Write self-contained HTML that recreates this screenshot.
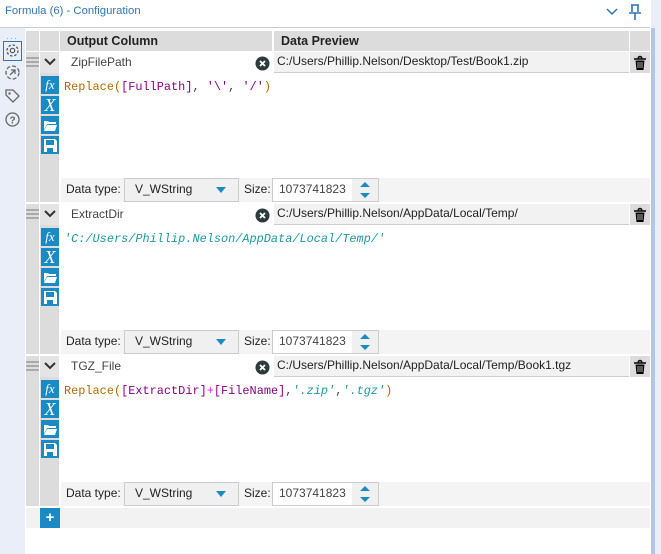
<!DOCTYPE html>
<html><head><meta charset="utf-8"><style>
*{margin:0;padding:0;box-sizing:border-box}
body{width:661px;height:554px;position:relative;background:#fff;font-family:"Segoe UI","Liberation Sans",sans-serif;font-size:12px;color:#222;overflow:hidden}
.a{position:absolute}
.title{left:5px;top:5px;color:#2e75b6;font-size:11.3px}
.hdr{top:31px;height:20px;background:#dcdcdc;font-weight:bold;font-size:12.5px;line-height:20px}
.mono{font-family:"Liberation Mono",monospace;font-size:11.9px}
.ico{left:41px;width:18px;height:18px;background:#1b8ac4;color:#fff}
.inp{background:#fff}
.sel{background:#f0f0f0;border:1px solid #ccc}
</style></head><body>
<div class="a title">Formula (6) - Configuration</div>
<svg class="a" style="left:605px;top:7px" width="14" height="10"><path d="M2 2 L7 7 L12 2" stroke="#2e75b6" stroke-width="1.5" fill="none"/></svg>
<svg class="a" style="left:627px;top:3px" width="16" height="18"><path d="M4 2 H12 M5 2 V9 M11 2 V9 M2 10 H14 M8 10 V17" stroke="#2e75b6" stroke-width="1.6" fill="none"/></svg>
<div class="a" style="left:0;top:27px;width:650px;height:1px;background:#ccc"></div>
<div class="a" style="left:0;top:28px;width:25px;height:526px;background:#e9eef8"></div>
<div class="a" style="left:651px;top:0;width:10px;height:554px;background:#e9eef8"></div>
<div class="a" style="left:651px;top:28px;width:4px;height:526px;background:#b3c6e8"></div>
<div class="a" style="left:6px;top:33px;color:#999;font-size:9px;letter-spacing:1px">···</div>
<div class="a" style="left:3px;top:41px;width:19px;height:20px;border:1px solid #2e75b6"></div>
<svg class="a" style="left:4px;top:42px" width="17" height="17"><circle cx="8.5" cy="8.5" r="5.5" stroke="#555" stroke-width="1.3" fill="none" stroke-dasharray="2.5 1.8"/><circle cx="8.5" cy="8.5" r="2.2" stroke="#555" stroke-width="1.2" fill="none"/></svg>
<svg class="a" style="left:4px;top:64px" width="17" height="17"><circle cx="8.5" cy="8.5" r="6.5" stroke="#666" stroke-width="1.3" fill="none" stroke-dasharray="4 2"/><path d="M6 11 L11 6 M7 6 H11 V10" stroke="#666" stroke-width="1.3" fill="none"/></svg>
<svg class="a" style="left:4px;top:88px" width="17" height="17"><path d="M2 2 H9 L15 8 L9 14 L2 7 Z" stroke="#666" stroke-width="1.3" fill="none"/><circle cx="5.5" cy="5.5" r="1.2" fill="#666"/></svg>
<svg class="a" style="left:4px;top:111px" width="17" height="17"><circle cx="8.5" cy="8.5" r="6.5" stroke="#666" stroke-width="1.3" fill="none"/><text x="8.5" y="12.5" font-size="10" text-anchor="middle" fill="#666" font-family="Liberation Sans" font-weight="bold">?</text></svg>

<div class="a hdr" style="left:26px;width:13px"></div>
<div class="a hdr" style="left:40px;width:19px"></div>
<div class="a hdr" style="left:60px;width:212px;padding-left:7px">Output Column</div>
<div class="a hdr" style="left:274px;width:355px;padding-left:7px">Data Preview</div>
<div class="a hdr" style="left:630px;width:20px"></div>

<div class="a" style="left:0;top:52px;width:651px;height:152px">
 <div class="a" style="left:26px;top:0;width:13px;height:150px;background:#dcdcdc"></div>
 <div class="a" style="left:26px;top:5px;width:13px;height:11px;background:repeating-linear-gradient(#aaa 0 2px,#dcdcdc 2px 4px)"></div>
 <div class="a" style="left:40px;top:0;width:19px;height:150px;background:#dcdcdc"></div>
 <div class="a" style="left:40px;top:0;width:19px;height:21px;background:#e4e4e4"></div>
 <svg class="a" style="left:43px;top:5px" width="14" height="10"><path d="M2 2 L7 7 L12 2" stroke="#333" stroke-width="2" fill="none"/></svg>
 <div class="a inp" style="left:61px;top:1px;width:211px;height:20px;padding:2px 0 0 10px;color:#444">ZipFilePath</div>
 <svg class="a" style="left:255px;top:4px" width="15" height="15"><circle cx="7.5" cy="7.5" r="7" fill="#2d3b3b"/><path d="M5 5 L10 10 M10 5 L5 10" stroke="#fff" stroke-width="1.8"/></svg>
 <div class="a" style="left:274px;top:0;width:355px;height:21px;background:#f2f2f2;border-bottom:1px solid #ccc;padding:2px 0 0 3px">C:/Users/Phillip.Nelson/Desktop/Test/Book1.zip</div>
 <div class="a" style="left:630px;top:0;width:20px;height:21px;background:#dcdcdc"></div>
 <svg class="a" style="left:633px;top:3px" width="14" height="16"><path d="M1 4 H13 M5 3 Q7 0 9 3" stroke="#000" stroke-width="1.6" fill="none"/><path d="M2.5 5.5 H11.5 L10.5 15 H3.5 Z" fill="#000"/><path d="M5 7 V13 M7 7 V13 M9 7 V13" stroke="#dcdcdc" stroke-width="0.8"/></svg>
 <div class="a" style="left:61px;top:22px;width:589px;height:104px;background:#fff"></div>
 <div class="a mono" style="left:64px;top:28px;color:#b26b00">Replace(<span style="color:#8b008b">[FullPath]</span><span style="color:#444">, </span><span style="color:#8b008b">'\'</span><span style="color:#444">, </span><span style="color:#8b008b">'/'</span>)</div>
 <div class="a" style="left:61px;top:126px;width:589px;height:24px;background:#f4f4f4"></div>
 <div class="a" style="left:66px;top:130px">Data type:</div>
 <div class="a sel" style="left:124px;top:126px;width:115px;height:24px;padding:3px 0 0 10px">V_WString</div>
 <svg class="a" style="left:215px;top:134px" width="12" height="8"><path d="M1 1 H11 L6 7 Z" fill="#1b8ac4"/></svg>
 <div class="a" style="left:244px;top:130px">Size:</div>
 <div class="a" style="left:272px;top:126px;width:107px;height:24px;border:1px solid #ccc;background:#f0f0f0"></div>
 <div class="a inp" style="left:273px;top:127px;width:79px;height:22px;padding:3px 0 0 6px;color:#444">1073741823</div>
 <svg class="a" style="left:358px;top:128px" width="14" height="20"><path d="M2 7 L7 2 L12 7 Z M2 13 L7 18 L12 13 Z" fill="#1b8ac4"/></svg>
</div>

<div class="a" style="left:0;top:204px;width:651px;height:152px">
 <div class="a" style="left:26px;top:0;width:13px;height:150px;background:#dcdcdc"></div>
 <div class="a" style="left:26px;top:5px;width:13px;height:11px;background:repeating-linear-gradient(#aaa 0 2px,#dcdcdc 2px 4px)"></div>
 <div class="a" style="left:40px;top:0;width:19px;height:150px;background:#dcdcdc"></div>
 <div class="a" style="left:40px;top:0;width:19px;height:21px;background:#e4e4e4"></div>
 <svg class="a" style="left:43px;top:5px" width="14" height="10"><path d="M2 2 L7 7 L12 2" stroke="#333" stroke-width="2" fill="none"/></svg>
 <div class="a inp" style="left:61px;top:1px;width:211px;height:20px;padding:2px 0 0 10px;color:#444">ExtractDir</div>
 <svg class="a" style="left:255px;top:4px" width="15" height="15"><circle cx="7.5" cy="7.5" r="7" fill="#2d3b3b"/><path d="M5 5 L10 10 M10 5 L5 10" stroke="#fff" stroke-width="1.8"/></svg>
 <div class="a" style="left:274px;top:0;width:355px;height:21px;background:#f2f2f2;border-bottom:1px solid #ccc;padding:2px 0 0 3px">C:/Users/Phillip.Nelson/AppData/Local/Temp/</div>
 <div class="a" style="left:630px;top:0;width:20px;height:21px;background:#dcdcdc"></div>
 <svg class="a" style="left:633px;top:3px" width="14" height="16"><path d="M1 4 H13 M5 3 Q7 0 9 3" stroke="#000" stroke-width="1.6" fill="none"/><path d="M2.5 5.5 H11.5 L10.5 15 H3.5 Z" fill="#000"/><path d="M5 7 V13 M7 7 V13 M9 7 V13" stroke="#dcdcdc" stroke-width="0.8"/></svg>
 <div class="a" style="left:61px;top:22px;width:589px;height:104px;background:#fff"></div>
 <div class="a mono" style="left:64px;top:28px;color:#1a9aa0;font-style:italic">'C:/Users/Phillip.Nelson/AppData/Local/Temp/'</div>
 <div class="a" style="left:61px;top:126px;width:589px;height:24px;background:#f4f4f4"></div>
 <div class="a" style="left:66px;top:130px">Data type:</div>
 <div class="a sel" style="left:124px;top:126px;width:115px;height:24px;padding:3px 0 0 10px">V_WString</div>
 <svg class="a" style="left:215px;top:134px" width="12" height="8"><path d="M1 1 H11 L6 7 Z" fill="#1b8ac4"/></svg>
 <div class="a" style="left:244px;top:130px">Size:</div>
 <div class="a" style="left:272px;top:126px;width:107px;height:24px;border:1px solid #ccc;background:#f0f0f0"></div>
 <div class="a inp" style="left:273px;top:127px;width:79px;height:22px;padding:3px 0 0 6px;color:#444">1073741823</div>
 <svg class="a" style="left:358px;top:128px" width="14" height="20"><path d="M2 7 L7 2 L12 7 Z M2 13 L7 18 L12 13 Z" fill="#1b8ac4"/></svg>
</div>

<div class="a" style="left:0;top:356px;width:651px;height:152px">
 <div class="a" style="left:26px;top:0;width:13px;height:150px;background:#dcdcdc"></div>
 <div class="a" style="left:26px;top:5px;width:13px;height:11px;background:repeating-linear-gradient(#aaa 0 2px,#dcdcdc 2px 4px)"></div>
 <div class="a" style="left:40px;top:0;width:19px;height:150px;background:#dcdcdc"></div>
 <div class="a" style="left:40px;top:0;width:19px;height:21px;background:#e4e4e4"></div>
 <svg class="a" style="left:43px;top:5px" width="14" height="10"><path d="M2 2 L7 7 L12 2" stroke="#333" stroke-width="2" fill="none"/></svg>
 <div class="a inp" style="left:61px;top:1px;width:211px;height:20px;padding:2px 0 0 10px;color:#444">TGZ_File</div>
 <svg class="a" style="left:255px;top:4px" width="15" height="15"><circle cx="7.5" cy="7.5" r="7" fill="#2d3b3b"/><path d="M5 5 L10 10 M10 5 L5 10" stroke="#fff" stroke-width="1.8"/></svg>
 <div class="a" style="left:274px;top:0;width:355px;height:21px;background:#f2f2f2;border-bottom:1px solid #ccc;padding:2px 0 0 3px">C:/Users/Phillip.Nelson/AppData/Local/Temp/Book1.tgz</div>
 <div class="a" style="left:630px;top:0;width:20px;height:21px;background:#dcdcdc"></div>
 <svg class="a" style="left:633px;top:3px" width="14" height="16"><path d="M1 4 H13 M5 3 Q7 0 9 3" stroke="#000" stroke-width="1.6" fill="none"/><path d="M2.5 5.5 H11.5 L10.5 15 H3.5 Z" fill="#000"/><path d="M5 7 V13 M7 7 V13 M9 7 V13" stroke="#dcdcdc" stroke-width="0.8"/></svg>
 <div class="a" style="left:61px;top:22px;width:589px;height:104px;background:#fff"></div>
 <div class="a mono" style="left:64px;top:28px;color:#b26b00">Replace(<span style="color:#8b008b">[ExtractDir]</span><span style="color:#e020e0">+</span><span style="color:#8b008b">[FileName]</span><span style="color:#444">,</span><span style="color:#1a9aa0;font-style:italic">'.zip'</span><span style="color:#444">,</span><span style="color:#1a9aa0;font-style:italic">'.tgz'</span>)</div>
 <div class="a" style="left:61px;top:126px;width:589px;height:24px;background:#f4f4f4"></div>
 <div class="a" style="left:66px;top:130px">Data type:</div>
 <div class="a sel" style="left:124px;top:126px;width:115px;height:24px;padding:3px 0 0 10px">V_WString</div>
 <svg class="a" style="left:215px;top:134px" width="12" height="8"><path d="M1 1 H11 L6 7 Z" fill="#1b8ac4"/></svg>
 <div class="a" style="left:244px;top:130px">Size:</div>
 <div class="a" style="left:272px;top:126px;width:107px;height:24px;border:1px solid #ccc;background:#f0f0f0"></div>
 <div class="a inp" style="left:273px;top:127px;width:79px;height:22px;padding:3px 0 0 6px;color:#444">1073741823</div>
 <svg class="a" style="left:358px;top:128px" width="14" height="20"><path d="M2 7 L7 2 L12 7 Z M2 13 L7 18 L12 13 Z" fill="#1b8ac4"/></svg>
</div>

<div class="a" style="left:26px;top:508px;width:624px;height:20px;background:#f2f2f2"></div>
<div class="a" style="left:40px;top:508px;width:20px;height:20px;background:#1b8ac4;color:#fff;text-align:center;font-weight:bold;font-size:15px;line-height:19px">+</div>

<div class="a ico" style="top:76px;font-family:'Liberation Serif',serif;font-style:italic;font-size:13px;text-align:center;line-height:17px">fx</div>
<div class="a ico" style="top:96px;font-family:'Liberation Serif',serif;font-style:italic;font-size:18px;text-align:center;line-height:18px">X</div>
<svg class="a ico" style="top:116px" viewBox="0 0 18 18"><path d="M3 5 H7 L8 6 H15 V8 H6 L3 14 Z M6 9 H16 L14 15 H3 Z" fill="#fff"/></svg>
<svg class="a ico" style="top:136px" viewBox="0 0 18 18"><path d="M3 3 H14 L16 5 V16 H3 Z" fill="#fff"/><rect x="5" y="4" width="8" height="5" fill="#1b8ac4"/><rect x="6" y="12" width="6" height="4" fill="#1b8ac4"/></svg>

<div class="a ico" style="top:228px;font-family:'Liberation Serif',serif;font-style:italic;font-size:13px;text-align:center;line-height:17px">fx</div>
<div class="a ico" style="top:248px;font-family:'Liberation Serif',serif;font-style:italic;font-size:18px;text-align:center;line-height:18px">X</div>
<svg class="a ico" style="top:268px" viewBox="0 0 18 18"><path d="M3 5 H7 L8 6 H15 V8 H6 L3 14 Z M6 9 H16 L14 15 H3 Z" fill="#fff"/></svg>
<svg class="a ico" style="top:288px" viewBox="0 0 18 18"><path d="M3 3 H14 L16 5 V16 H3 Z" fill="#fff"/><rect x="5" y="4" width="8" height="5" fill="#1b8ac4"/><rect x="6" y="12" width="6" height="4" fill="#1b8ac4"/></svg>

<div class="a ico" style="top:380px;font-family:'Liberation Serif',serif;font-style:italic;font-size:13px;text-align:center;line-height:17px">fx</div>
<div class="a ico" style="top:400px;font-family:'Liberation Serif',serif;font-style:italic;font-size:18px;text-align:center;line-height:18px">X</div>
<svg class="a ico" style="top:420px" viewBox="0 0 18 18"><path d="M3 5 H7 L8 6 H15 V8 H6 L3 14 Z M6 9 H16 L14 15 H3 Z" fill="#fff"/></svg>
<svg class="a ico" style="top:440px" viewBox="0 0 18 18"><path d="M3 3 H14 L16 5 V16 H3 Z" fill="#fff"/><rect x="5" y="4" width="8" height="5" fill="#1b8ac4"/><rect x="6" y="12" width="6" height="4" fill="#1b8ac4"/></svg>
</body></html>
